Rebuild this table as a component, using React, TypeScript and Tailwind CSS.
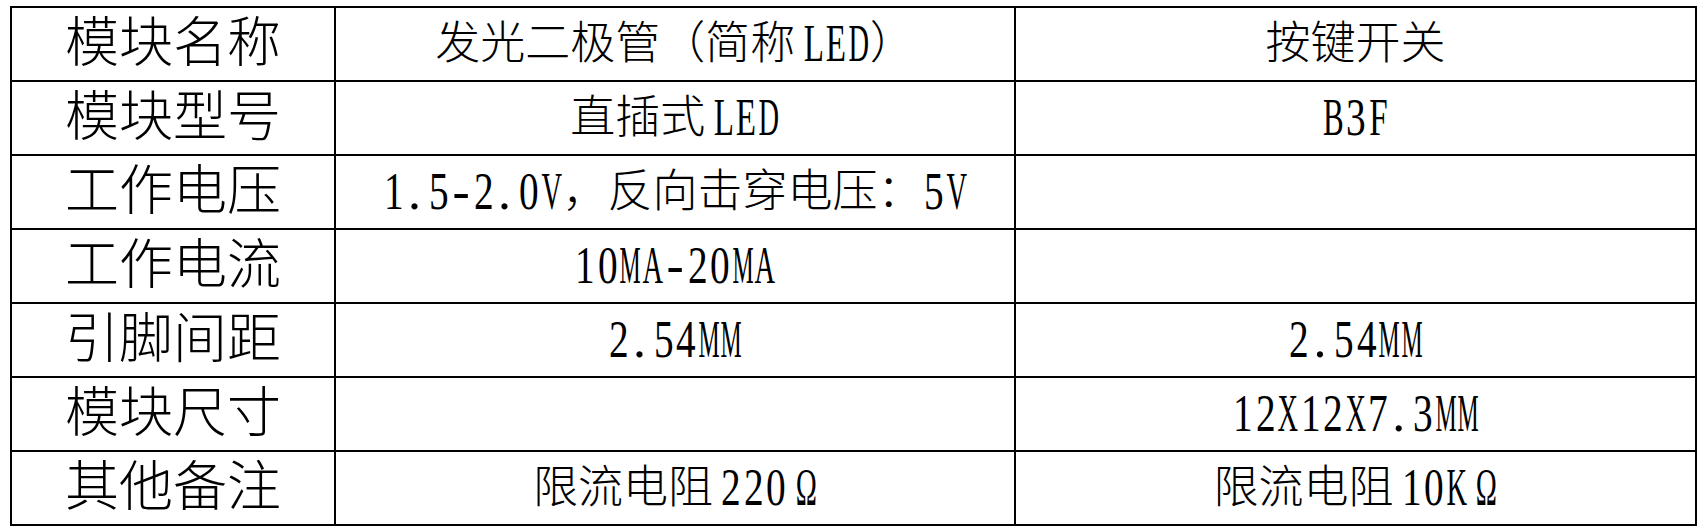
import React from "react";

const rows: [string, string, string][] = [
  ["模块名称", "发光二极管（简称LED）", "按键开关"],
  ["模块型号", "直插式LED", "B3F"],
  ["工作电压", "1.5-2.0V，反向击穿电压：5V", ""],
  ["工作电流", "10MA-20MA", ""],
  ["引脚间距", "2.54MM", "2.54MM"],
  ["模块尺寸", "", "12X12X7.3MM"],
  ["其他备注", "限流电阻220Ω", "限流电阻10KΩ"],
];

// half-width latin glyphs are narrow in the source (SimSun style)
function squeeze(ch: string) {
  if (ch === "M" || ch === "W") return "scale-x-[0.46]";
  if (/[0-9]/.test(ch)) return "scale-x-[0.76]";
  if (ch === "L" || ch === "E" || ch === "F") return "scale-x-[0.64]";
  if (ch === "B") return "scale-x-[0.6]";
  if (/[A-Z]|Ω/.test(ch)) return "scale-x-[0.55]";
  return "scale-x-100";
}

const isLatin = (ch: string) => /[\x20-\x7eΩ]/.test(ch);

function Text({ value }: { value: string }) {
  const chars = Array.from(value);
  return (
    <>
      {chars.map((ch, i) => {
        if (!isLatin(ch)) return <React.Fragment key={i}>{ch}</React.Fragment>;
        const prev = chars[i - 1];
        const gap = (prev && !isLatin(prev) && !/[，：（]/.test(prev)) || ch === "Ω" ? "ml-[7px]" : "";
        const align = ch === "." ? "justify-start pl-[3px]" : "justify-center";
        return (
          <span key={i} className={`inline-flex w-[0.5em] ${align} ${gap}`}>
            <span className={`inline-block text-[1.15em] ${squeeze(ch)}`}>{ch}</span>
          </span>
        );
      })}
    </>
  );
}

export default function App() {
  return (
    <div
      className="min-h-screen bg-white pl-[10px] pt-[6px] text-black"
      style={{ fontFamily: '"Liberation Serif", "Noto Sans CJK SC", serif' }}
    >
      <div className="grid w-fit grid-cols-[324px_680px_681px] border-t-2 border-l-2 border-black">
        {rows.map(([label, led, key]) => (
          <React.Fragment key={label}>
            <div className="flex h-[74px] items-center justify-center border-r-2 border-b-2 border-black text-[54px] leading-none font-light">
              {label}
            </div>
            <div className="flex h-[74px] items-center justify-center border-r-2 border-b-2 border-black text-[45px] leading-none font-light">
              <Text value={led} />
            </div>
            <div className="flex h-[74px] items-center justify-center border-r-2 border-b-2 border-black text-[45px] leading-none font-light">
              <Text value={key} />
            </div>
          </React.Fragment>
        ))}
      </div>
    </div>
  );
}
